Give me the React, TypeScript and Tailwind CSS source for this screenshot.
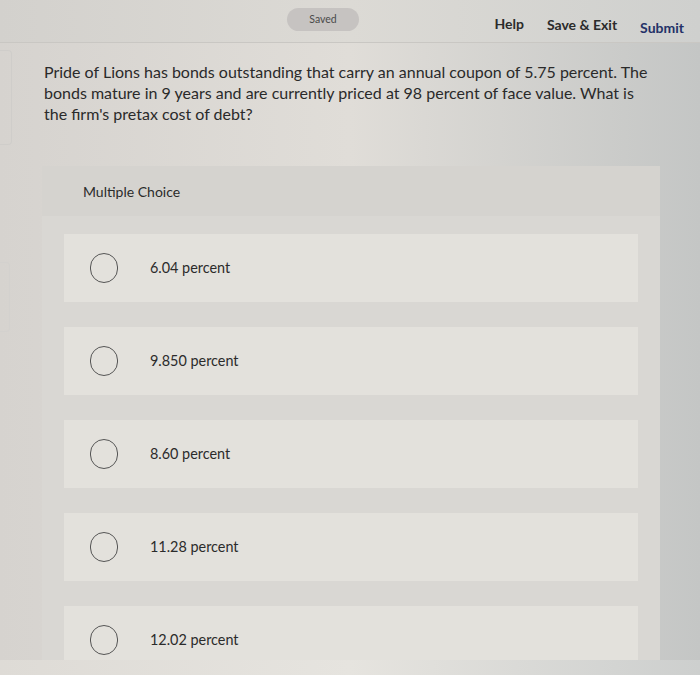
import React from "react";

const choices = ["6.04 percent", "9.850 percent", "8.60 percent", "11.28 percent", "12.02 percent"];

export default function App() {
  return (
    <div
      className="relative w-[700px] h-[675px] overflow-hidden bg-gradient-to-r from-[#d6d3cf] via-[#e0ddd8] to-[#c4c6c5] text-[#2a2a2a]"
      style={{ fontFamily: "Lato, 'Open Sans', sans-serif" }}
    >
      {/* top bar */}
      <div className="h-[43px] flex items-start border-b border-[#c9c7c3] bg-gradient-to-r from-[#d3d1cd] via-[#dcdad5] to-[#cfd0ce]">
        <div className="ml-[287px] mt-[8px] w-[72px] h-[23px] rounded-full bg-[#c6c3c1] flex items-center justify-center text-[10.5px] text-[#4a4a4a]">
          Saved
        </div>
        <div className="ml-auto mr-[16px] mt-[13px] flex items-start gap-[23px] text-[14px] font-bold">
          <span className="text-[#2b2b2b]">Help</span>
          <span className="text-[#2b2b2b] mt-[1px]">Save &amp; Exit</span>
          <span className="text-[#243167] mt-[4px]">Submit</span>
        </div>
      </div>

      {/* left edge boxes */}
      <div className="absolute left-0 top-[50px] w-[12px] h-[95px] border border-l-0 border-[#cfcdca] rounded-r" />
      <div className="absolute left-0 top-[262px] w-[10px] h-[70px] border border-l-0 border-[#d3d1ce] rounded-r" />

      <div className="pl-[44px] pr-[40px] pt-[18px]">
        <p className="text-[16px] leading-[21px] text-[#2a2a2a]">
          Pride of Lions has bonds outstanding that carry an annual coupon of 5.75 percent. The bonds mature in 9 years and are currently priced at 98 percent of face value. What is the firm's pretax cost of debt?
        </p>
      </div>

      {/* multiple choice panel */}
      <div className="ml-[42px] mr-[40px] mt-[42px] h-[494px] overflow-hidden bg-[#d9d7d3]">
        <div className="h-[50px] flex items-center pl-[41px] bg-[#d5d3cf] text-[14px] text-[#2b2b2b]">
          Multiple Choice
        </div>
        <div className="px-[22px] pt-[18px] flex flex-col gap-[25px]">
          {choices.map((c) => (
            <div key={c} className="h-[68px] shrink-0 flex items-center bg-[#e3e1dc]">
              <div className="ml-[26px] w-[28px] h-[30px] rounded-full border-[1.5px] border-[#555]" />
              <span className="ml-[32px] text-[14.4px] text-[#2b2b2b]">{c}</span>
            </div>
          ))}
        </div>
      </div>
      <div className="h-[15px] bg-gradient-to-r from-[#dedbd6] via-[#e6e4df] to-[#cdcfce]" />
    </div>
  );
}
